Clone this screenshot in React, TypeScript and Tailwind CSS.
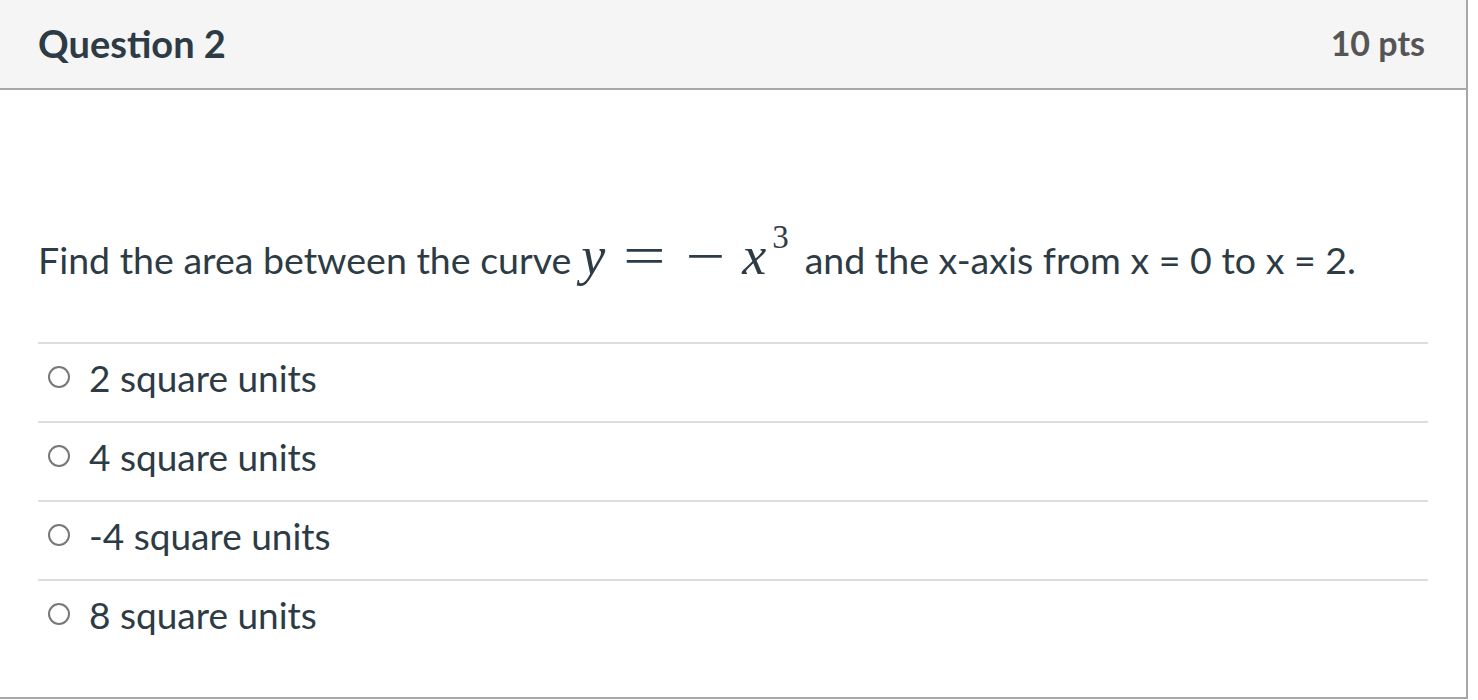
import React from 'react';

const answers = ['2 square units', '4 square units', '-4 square units', '8 square units'];

const Radio: React.FC = () => (
  <span className="inline-block w-[22px] h-[22px] rounded-full border-2 border-[#787878] bg-white shrink-0" />
);

const serif = { fontFamily: '"Liberation Serif", "DejaVu Serif", serif' };

const App: React.FC = () => {
  return (
    <div className="w-[1478px] h-[700px] bg-white overflow-hidden" style={{ fontFamily: 'Lato, "Noto Sans", sans-serif' }}>
      <div className="w-[1468px] h-[699px] border-r-2 border-b-2 border-[#a7a7a7] flex flex-col">
        {/* header */}
        <div className="h-[90px] bg-[#f5f5f5] border-b-2 border-[#a7a7a7] flex items-center justify-between pl-[38px] pr-[41px] pb-[2px] shrink-0">
          <h2 className="text-[38px] font-bold text-[#2d3b45] leading-none">Question 2</h2>
          <span className="text-[34px] font-bold text-[#555555] leading-none">10 pts</span>
        </div>

        {/* body */}
        <div className="px-[38px] pt-[136px]">
          <p className="text-[37.5px] text-[#2d3b45] leading-[60px] h-[116px] flex items-baseline whitespace-nowrap">
            <span>Find the area between the curve</span>
            <span className="ml-[10px] flex items-baseline text-[#2d3b45]" style={serif}>
              <span className="italic text-[54px]">y</span>
              <span className="inline-block text-[54px] ml-[24px] scale-x-[1.4]">=</span>
              <span className="inline-block text-[54px] ml-[30px] scale-x-[1.3]">−</span>
              <span className="italic text-[54px] ml-[22px]">x</span>
              <span className="text-[33px] ml-[6px] relative top-[-26px]">3</span>
            </span>
            <span className="ml-[16px]">and the x-axis from x = 0 to x = 2.</span>
          </p>

          <ul>
            {answers.map((a) => (
              <li key={a} className="border-t-2 border-[#dddddd] h-[79px] flex items-center pl-[10px] pb-[11px] gap-[19px]">
                <Radio />
                <span className="text-[37px] text-[#2d3b45] leading-none">{a}</span>
              </li>
            ))}
          </ul>
        </div>
      </div>
    </div>
  );
};

export default App;
